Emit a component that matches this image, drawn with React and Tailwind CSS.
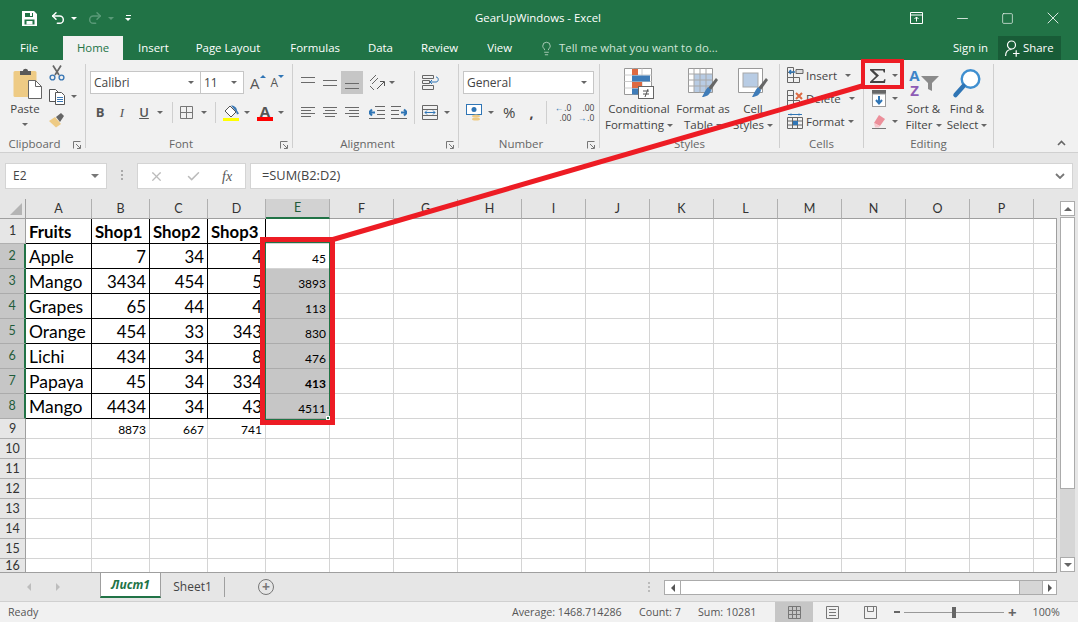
import React from 'react';
import { Undo2, Redo2, Lightbulb, X, Check, Minus, Square } from 'lucide-react';

function Caret({ className = '' }) {
  return <span className={`inline-block w-0 h-0 border-x-[3px] border-x-transparent border-t-[3px] border-t-[#666] ${className}`} />;
}

function Launcher() {
  return (
    <svg width="8" height="8" viewBox="0 0 8 8" className="absolute right-[4px] top-[5px]" fill="none" stroke="#777">
      <path d="M0.5 7.5V0.5H7.5" />
      <path d="M3 3l4 4M4 7.5h3.5V4" />
    </svg>
  );
}

function Group({ width, label, launcher = false, children }) {
  return (
    <div className={`flex shrink-0 ${width}`}>
      <div className="flex flex-1 flex-col min-w-0">
        <div className="h-[76px]">{children}</div>
        <div className={`relative h-[16px] text-center text-[11.5px] leading-[16px] text-[#666] ${launcher ? 'pr-[16px]' : ''}`}>
          {label}
          {launcher && <Launcher />}
        </div>
      </div>
      <div className="w-px my-[4px] bg-[#cfcfcf]" />
    </div>
  );
}

function LargeButton({ width, icon, line1, line2, caret }) {
  return (
    <div className={`flex flex-col items-center pt-[8px] ${width}`}>
      <div className="h-[33px]">{icon}</div>
      <div className="text-[11.5px] leading-[16px] whitespace-nowrap text-[#444]">{line1}</div>
      <div className="flex items-center gap-[3px] text-[11.5px] leading-[16px] whitespace-nowrap text-[#444]">
        {line2}
        {caret && <Caret />}
      </div>
    </div>
  );
}

function Lines({ rows, w = 16, h = 16 }) {
  return (
    <svg width={w} height={h} viewBox={`0 0 ${w} ${h}`} stroke="#6a6a6a" fill="none">
      {rows.map(([x1, x2, y], i) => (
        <path key={i} d={`M${x1} ${y + 0.5}H${x2}`} />
      ))}
    </svg>
  );
}

function PasteIcon() {
  return (
    <svg width="30" height="31" viewBox="0 0 30 31" className="ml-[5px]">
      <rect x="0.5" y="3" width="23" height="26" rx="1.5" fill="#eecb85" />
      <path d="M7 3h3c0-3 5-3 5 0h3v4H7z" fill="#595959" />
      <path d="M15.5 12.5h7l6 6v12h-13z" fill="#fff" stroke="#666" />
      <path d="M22.5 12.5v6h6" fill="none" stroke="#666" />
    </svg>
  );
}

function CutIcon() {
  return (
    <svg width="16" height="16" viewBox="0 0 16 16" fill="none">
      <path d="M4 0.5l6 9.5M12 0.5l-6 9.5" stroke="#666" strokeWidth="1.7" />
      <circle cx="3.5" cy="12.5" r="2.4" stroke="#3b78b5" strokeWidth="1.4" />
      <circle cx="12.5" cy="12.5" r="2.4" stroke="#3b78b5" strokeWidth="1.4" />
    </svg>
  );
}

function CopyIcon() {
  return (
    <svg width="16" height="16" viewBox="0 0 16 16" fill="#fff" stroke="#555">
      <path d="M0.5 0.5h6l3 3v9h-9z" />
      <path d="M6.5 3.5h6l3 3v9h-9z" />
      <path d="M8 8.5h6M8 10.5h6M8 12.5h6" stroke="#3b78b5" />
    </svg>
  );
}

function PainterIcon() {
  return (
    <svg width="16" height="16" viewBox="0 0 16 16">
      <path d="M0 9l6-4 6 7-5 3.5z" fill="#eecb85" />
      <path d="M7 5l5-4 3 3-4 6z" fill="#666" />
    </svg>
  );
}

function BordersIcon() {
  return (
    <svg width="14" height="14" viewBox="0 0 14 14" fill="none" stroke="#777">
      <path d="M0.5 0.5h12v12h-12zM6.5 0.5v12M0.5 6.5h12" />
    </svg>
  );
}

function FillIcon() {
  return (
    <svg width="17" height="16" viewBox="0 0 17 16">
      <path d="M7 1l6 6-5 5-6-6z" fill="#fff" stroke="#555" />
      <path d="M8 0.5c3 0 6 2 6 5l2 3-2 1-1-3z" fill="#3b78b5" />
      <rect x="0" y="13" width="16" height="3" fill="#ffff00" />
    </svg>
  );
}

function FontColorIcon() {
  return (
    <div className="flex flex-col items-center w-[16px] h-[17px]">
      <span className="h-[13px] text-[15px] leading-[14px] font-bold text-[#555]">A</span>
      <span className="mt-auto h-[4px] w-[16px] bg-[#ff0000]" />
    </div>
  );
}

function OrientIcon() {
  return (
    <svg width="17" height="17" viewBox="0 0 17 17" fill="none" stroke="#666">
      <path d="M1 7l6-6M3 10l6-6M1 12l4 4" />
      <path d="M8 15l7-7M11 7.5h4.5V12" stroke="#555" />
    </svg>
  );
}

function WrapIcon() {
  return (
    <svg width="17" height="16" viewBox="0 0 17 16" fill="none" stroke="#666">
      <path d="M0.5 0.5h11v3h-11zM0.5 5.5h7v3h-7zM0.5 10.5h11v4h-11z" />
      <path d="M8 7h6c3 0 3-5 0-5M8 7l2-2M8 7l2 2" stroke="#2f75b5" />
    </svg>
  );
}

function IndentIcon({ flip }) {
  return (
    <svg width="16" height="13" viewBox="0 0 16 13" fill="none" stroke="#666" className={flip ? '-scale-x-100' : ''}>
      <path d="M6 0.5h10M8 4.5h8M8 8.5h8M0 12.5h16" />
      <path d="M0 6.5h6M0 6.5l3-3M0 6.5l3 3" stroke="#2f75b5" strokeWidth="2" />
    </svg>
  );
}

function MergeIcon() {
  return (
    <svg width="16" height="15" viewBox="0 0 16 15" fill="none" stroke="#666">
      <path d="M0.5 0.5h15v14h-15zM0.5 4.5h15M0.5 10.5h15" />
      <path d="M3 7.5h10M3 7.5l2-2M3 7.5l2 2M13 7.5l-2-2M13 7.5l-2 2" stroke="#2f75b5" />
    </svg>
  );
}

function AccountingIcon() {
  return (
    <svg width="16" height="18" viewBox="0 0 16 18">
      <rect x="0.5" y="0.5" width="15" height="10" fill="#fff" stroke="#2f75b5" />
      <circle cx="8" cy="5.5" r="2.5" fill="#2f75b5" />
      <ellipse cx="10" cy="12" rx="4" ry="1.6" fill="#eecb85" />
      <ellipse cx="10" cy="15" rx="4" ry="1.6" fill="#eecb85" />
    </svg>
  );
}

function DecimalIcon({ top, bottom, dir }) {
  return (
    <div className="flex w-[18px] flex-col text-[8.5px] leading-[10px] text-[#444]">
      <div className="flex items-center justify-end gap-[1px]">
        {dir === 'left' && <span className="text-[#2f75b5] font-bold">←</span>}
        {top}
      </div>
      <div className="flex items-center justify-end gap-[1px]">
        {dir === 'right' && <span className="text-[#2f75b5] font-bold">→</span>}
        {bottom}
      </div>
    </div>
  );
}

function ConditionalIcon() {
  return (
    <svg width="30" height="31" viewBox="0 0 30 31">
      <path d="M0.5 0.5h27v26h-27z" fill="#fff" stroke="#999" />
      <path d="M0.5 7h27M0.5 13.5h27M0.5 20h27M9 0.5v26M18 0.5v26" stroke="#ccc" />
      <rect x="8" y="1" width="6" height="6" fill="#de6a42" />
      <rect x="8" y="7.5" width="18" height="6" fill="#3f7cb8" />
      <rect x="8" y="14" width="10" height="6" fill="#de6a42" />
      <rect x="8" y="20.5" width="6" height="6" fill="#3f7cb8" />
      <rect x="14.5" y="18.5" width="15" height="12" fill="#fff" stroke="#666" />
      <path d="M19 23h6M19 26h6M24 21l-3 8" stroke="#555" fill="none" />
    </svg>
  );
}

function FormatTableIcon() {
  return (
    <svg width="30" height="31" viewBox="0 0 30 31">
      <path d="M0.5 0.5h24v24h-24z" fill="#fff" stroke="#999" />
      <rect x="6" y="6" width="18" height="18" fill="#b8cce4" />
      <path d="M0.5 6h24M0.5 12h24M0.5 18h24M6 0.5v24M12 0.5v24M18 0.5v24" stroke="#a8a8a8" fill="none" />
      <path d="M28 10l2 2-7 10-3-2z" fill="#666" />
      <path d="M20 19l3 3c-1 5-5 7-9 7 2-3 3-7 6-10z" fill="#3f7cb8" />
    </svg>
  );
}

function CellStylesIcon() {
  return (
    <svg width="30" height="31" viewBox="0 0 30 31">
      <path d="M0.5 0.5h24v24h-24z" fill="#fff" stroke="#999" />
      <rect x="5" y="5" width="15" height="14" fill="#b8cce4" stroke="#a8a8a8" />
      <path d="M28 10l2 2-7 10-3-2z" fill="#666" />
      <path d="M20 19l3 3c-1 5-5 7-9 7 2-3 3-7 6-10z" fill="#3f7cb8" />
    </svg>
  );
}

function CellRowIcon({ kind }) {
  return (
    <svg width="17" height="17" viewBox="0 0 17 17" fill="none" stroke="#666">
      {kind === 'format' ? (
        <>
          <path d="M0.5 4.5h15v11h-15zM0.5 8h15M0.5 12h15M5.5 4.5v11M10.5 4.5v11" />
          <rect x="6" y="8" width="5" height="4" fill="#2f75b5" stroke="none" />
          <path d="M1 1.5h14M3 1.5l1-1M3 1.5l1 1M13 1.5l-1-1M13 1.5l-1 1" stroke="#2f75b5" />
        </>
      ) : (
        <>
          <path d="M0.5 0.5h6v5h-6zM0.5 5.5h6v5h-6zM0.5 10.5h6v5h-6zM6.5 10.5h6v5h-6z" />
          {kind === 'insert' ? (
            <>
              <path d="M9 2.5h7v4H9z" fill="#ddd" />
              <path d="M2 5h6M2 5l2-2M2 5l2 2" stroke="#2f75b5" strokeWidth="1.5" />
            </>
          ) : (
            <path d="M9 3l6 6M15 3l-6 6" stroke="#de6a42" strokeWidth="2" />
          )}
        </>
      )}
    </svg>
  );
}

function SigmaIcon() {
  return (
    <svg width="16" height="14" viewBox="0 0 16 14">
      <path d="M0 0h15v3.5h-1.2L13 1.6H3.5L9 6.5 3 12h10.5l.8-1.8h1.2L15 14H0v-1.3L6 7 0 1.2z" fill="#444" />
    </svg>
  );
}

function FillDownIcon() {
  return (
    <svg width="14" height="17" viewBox="0 0 14 17">
      <rect x="0" y="0" width="14" height="4" fill="#666" />
      <rect x="0.5" y="4" width="13" height="12.5" fill="#fff" stroke="#999" />
      <path d="M7 6v7M4 10l3 3.5 3-3.5" fill="none" stroke="#2f75b5" strokeWidth="2" />
    </svg>
  );
}

function EraserIcon() {
  return (
    <svg width="14" height="15" viewBox="0 0 14 15">
      <path d="M7 1l6 4-5 7-6-3z" fill="#ec8f9a" />
      <path d="M2 9l6 3-1 1.5H3z" fill="#f7c6cc" />
      <path d="M0 14.5h14" stroke="#777" />
    </svg>
  );
}

function SortIcon() {
  return (
    <div className="flex h-[31px] w-[31px]">
      <div className="flex w-[13px] flex-col items-center font-bold">
        <div className="h-[15px] text-[15px] leading-[15px] text-[#3f85c8]">A</div>
        <div className="h-[15px] text-[15px] leading-[15px] text-[#8e5bb5]">Z</div>
      </div>
      <svg width="18" height="16" viewBox="0 0 18 16" className="mt-[8px]">
        <path d="M0 0h18l-7 7v8l-4-2V7z" fill="#8a8a8a" />
      </svg>
    </div>
  );
}

function FindIcon() {
  return (
    <svg width="30" height="31" viewBox="0 0 30 31" fill="none">
      <circle cx="18.5" cy="11" r="8.8" stroke="#3f8fd0" strokeWidth="2.4" fill="#fff" />
      <path d="M11.5 18l-8 9" stroke="#2f75b5" strokeWidth="4.5" strokeLinecap="round" />
    </svg>
  );
}

function RibbonOptionsIcon() {
  return (
    <svg width="13" height="12" viewBox="0 0 13 12" fill="none" stroke="#fff">
      <path d="M0.5 0.5h12v11h-12zM0.5 3h12M6.5 9.5V5M4.5 7l2-2 2 2" />
    </svg>
  );
}

function ShareIcon() {
  return (
    <svg width="15" height="17" viewBox="0 0 15 17" fill="none" stroke="#fff" strokeWidth="1.2">
      <circle cx="6.5" cy="5" r="4" />
      <path d="M0.6 16c0-4 2.4-6.5 5.9-6.5M8 13.5h6.5M11.2 10.2v6.5" />
    </svg>
  );
}

const tabs = [
  ['File', 'ml-[20px] mr-[25px]'],
  ['Home', ''],
  ['Insert', 'ml-[15px]'],
  ['Page Layout', 'ml-[27px]'],
  ['Formulas', 'ml-[30px]'],
  ['Data', 'ml-[28px]'],
  ['Review', 'ml-[28px]'],
  ['View', 'ml-[29px]'],
];

function TitleBar() {
  return (
    <div className="shrink-0 bg-[#217346] text-white">
      <div className="flex h-[36px] items-center">
        <svg width="15" height="15" viewBox="0 0 15 15" className="ml-[22px]" fill="#fff">
          <path d="M0 0h12l3 3v12H0zM3 2v4h8V2zM2.500 8.500v5h10v-5z" fillRule="evenodd" />
          <rect x="8" y="2" width="2" height="3" />
          <rect x="4.500" y="10" width="6" height="3.500" />
        </svg>
        <Undo2 size={16} strokeWidth={2.2} className="ml-[13px]" />
        <Caret className="ml-[5px] !border-t-white" />
        <Redo2 size={16} strokeWidth={2.2} className="ml-[10px] text-[#5a9a78]" />
        <Caret className="ml-[5px] !border-t-[#5a9a78]" />
        <div className="ml-[11px] flex flex-col items-center gap-[2px]">
          <span className="h-px w-[5px] bg-white" />
          <Caret className="!border-t-white" />
        </div>
        <div className="ml-[344px] w-[126px] whitespace-nowrap text-[11.4px]">GearUpWindows - Excel</div>
        <div className="ml-[309px]"><RibbonOptionsIcon /></div>
        <Minus size={17} strokeWidth={1.1} className="ml-[31px]" />
        <Square size={13} strokeWidth={1.2} className="ml-[30px]" />
        <X size={20} strokeWidth={1} className="ml-[29px]" />
      </div>
      <div className="flex h-[24px] items-center text-[11.4px]">
        {tabs.map(([name, cls]) =>
          name === 'Home' ? (
            <div key={name} className="flex h-[24px] w-[60px] items-center justify-center bg-[#f1f1f1] text-[#217346]">{name}</div>
          ) : (
            <div key={name} className={cls}>{name}</div>
          )
        )}
        <Lightbulb size={15} strokeWidth={1.2} className="ml-[27px] text-[#cfe3d6]" />
        <div className="ml-[5px] text-[#cfe3d6]">Tell me what you want to do...</div>
        <div className="ml-auto">Sign in</div>
        <div className="ml-[10px] mr-[17px] flex h-[24px] w-[63px] items-center gap-[3px] bg-[#185c37] pl-[7px]">
          <ShareIcon />
          Share
        </div>
      </div>
    </div>
  );
}

function Ribbon() {
  return (
    <div className="flex h-[93px] shrink-0 border-b border-[#d0d0d0] bg-[#f1f1f1] text-[#444]">
      <Group width="w-[86px]" label="Clipboard" launcher>
        <div className="flex pl-[10px] pt-[8px]">
          <div className="flex w-[30px] flex-col items-center">
            <PasteIcon />
            <div className="mt-[2px] text-[11.5px] leading-[16px]">Paste</div>
            <Caret className="mt-[6px]" />
          </div>
          <div className="-mt-[3px] ml-[9px] flex flex-col gap-[7.5px]">
            <CutIcon />
            <div className="flex items-center gap-[6px]">
              <CopyIcon />
              <Caret />
            </div>
            <PainterIcon />
          </div>
        </div>
      </Group>

      <Group width="w-[207px]" label="Font" launcher>
        <div className="pl-[4px] pt-[11px]">
          <div className="flex h-[23px] items-center">
            <div className="flex h-[23px] w-[111px] items-center justify-between border border-[#c6c6c6] bg-white pl-[3px] pr-[6px] text-[12px]">
              Calibri
              <Caret />
            </div>
            <div className="flex h-[23px] w-[43px] items-center justify-between border border-l-0 border-[#c6c6c6] bg-white pl-[3px] pr-[6px] text-[12px]">
              11
              <Caret />
            </div>
            <span className="ml-[6px] flex items-start text-[15px] leading-[20px] text-[#555]">
              A<Caret className="mt-[2px] rotate-180 !border-t-[#2f75b5]" />
            </span>
            <span className="ml-[5px] flex items-start text-[12px] leading-[20px] text-[#555]">
              A<Caret className="mt-[2px] !border-t-[#2f75b5]" />
            </span>
          </div>
          <div className="mt-[7px] flex h-[23px] items-center">
            <span className="ml-[3px] w-[14px] text-center text-[13px] font-bold text-[#555]">B</span>
            <span className="ml-[8px] w-[14px] text-center text-[13px] italic text-[#555] font-['Liberation_Serif',serif]">I</span>
            <span className="ml-[8px] w-[14px] text-center text-[13px] font-semibold underline text-[#555]">U</span>
            <Caret className="ml-[6px]" />
            <span className="ml-[9px] h-[21px] w-px bg-[#cfcfcf]" />
            <span className="ml-[7px]"><BordersIcon /></span>
            <Caret className="ml-[7px]" />
            <span className="ml-[8px] h-[21px] w-px bg-[#cfcfcf]" />
            <span className="ml-[7px]"><FillIcon /></span>
            <Caret className="ml-[4px]" />
            <span className="ml-[7px]"><FontColorIcon /></span>
            <Caret className="ml-[5px]" />
          </div>
        </div>
      </Group>

      <Group width="w-[166px]" label="Alignment" launcher>
        <div className="flex pl-[4px] pt-[11px]">
          <div className="w-[117px]">
            <div className="flex h-[23px] items-center">
              <div className="flex w-[22px] justify-center"><Lines rows={[[0, 14, 2], [0, 14, 7]]} w={14} /></div>
              <div className="flex w-[22px] justify-center"><Lines rows={[[0, 14, 5], [0, 14, 10]]} w={14} /></div>
              <div className="flex h-[23px] w-[22px] items-center justify-center bg-[#c6c6c6]"><Lines rows={[[0, 14, 8], [0, 14, 13]]} w={14} /></div>
              <span className="ml-[6px]"><OrientIcon /></span>
              <Caret className="ml-[3px]" />
            </div>
            <div className="mt-[7px] flex h-[23px] items-center">
              <div className="flex w-[22px] justify-center"><Lines rows={[[0, 14, 2], [0, 10, 5], [0, 14, 8], [0, 10, 11]]} w={14} /></div>
              <div className="flex w-[22px] justify-center"><Lines rows={[[0, 14, 2], [2, 12, 5], [0, 14, 8], [2, 12, 11]]} w={14} /></div>
              <div className="flex w-[22px] justify-center"><Lines rows={[[0, 14, 2], [4, 14, 5], [0, 14, 8], [4, 14, 11]]} w={14} /></div>
              <span className="ml-[6px]"><IndentIcon /></span>
              <span className="ml-[6px]"><IndentIcon flip /></span>
            </div>
          </div>
          <span className="h-[53px] w-px bg-[#cfcfcf]" />
          <div className="ml-[7px]">
            <div className="flex h-[23px] items-center"><WrapIcon /></div>
            <div className="mt-[7px] flex h-[23px] items-center">
              <MergeIcon />
              <Caret className="ml-[6px]" />
            </div>
          </div>
        </div>
      </Group>

      <Group width="w-[141px]" label="Number" launcher>
        <div className="pl-[4px] pt-[11px]">
          <div className="flex h-[23px] w-[131px] items-center justify-between border border-[#c6c6c6] bg-white pl-[3px] pr-[6px] text-[12px]">
            General
            <Caret />
          </div>
          <div className="mt-[7px] flex h-[23px] items-center">
            <span className="ml-[3px]"><AccountingIcon /></span>
            <Caret className="ml-[6px]" />
            <span className="ml-[9px] text-[15px]">%</span>
            <span className="ml-[14px] text-[14px] font-bold">,</span>
            <span className="ml-[13px] h-[23px] w-px bg-[#cfcfcf]" />
            <span className="ml-[6px]"><DecimalIcon top=".0" bottom=".00" dir="left" /></span>
            <span className="ml-[5px]"><DecimalIcon top=".00" bottom=".0" dir="right" /></span>
          </div>
        </div>
      </Group>

      <Group width="w-[180px]" label="Styles">
        <div className="flex pl-[5px]">
          <LargeButton width="w-[68px]" icon={<ConditionalIcon />} line1="Conditional" line2="Formatting" caret />
          <LargeButton width="w-[60px]" icon={<FormatTableIcon />} line1="Format as" line2="Table" caret />
          <LargeButton width="w-[40px]" icon={<CellStylesIcon />} line1="Cell" line2="Styles" caret />
        </div>
      </Group>

      <Group width="w-[84px]" label="Cells">
        <div className="pl-[7px] pt-[4px] text-[11.5px]">
          <div className="flex h-[23px] items-center">
            <CellRowIcon kind="insert" />
            <span className="ml-[2px]">Insert</span>
            <Caret className="ml-[8px]" />
          </div>
          <div className="flex h-[23px] items-center">
            <CellRowIcon kind="delete" />
            <span className="ml-[2px]">Delete</span>
            <Caret className="ml-[8px]" />
          </div>
          <div className="flex h-[23px] items-center">
            <CellRowIcon kind="format" />
            <span className="ml-[2px]">Format</span>
            <Caret className="ml-[3px]" />
          </div>
        </div>
      </Group>

      <Group width="w-[130px]" label="Editing">
        <div className="flex pl-[6px]">
          <div className="w-[33px] pt-[4px]">
            <div className="flex h-[23px] items-center"><SigmaIcon /><Caret className="ml-[6px]" /></div>
            <div className="flex h-[23px] items-center pl-[2px]"><FillDownIcon /><Caret className="ml-[6px]" /></div>
            <div className="flex h-[23px] items-center pl-[2px]"><EraserIcon /><Caret className="ml-[6px]" /></div>
          </div>
          <LargeButton width="w-[41px]" icon={<SortIcon />} line1="Sort &" line2="Filter" caret />
          <LargeButton width="w-[46px]" icon={<FindIcon />} line1="Find &" line2="Select" caret />
        </div>
      </Group>

      <div className="flex flex-1 items-end justify-end pb-[6px] pr-[12px]">
        <svg width="9" height="6" viewBox="0 0 9 6" fill="none" stroke="#666" strokeWidth="1.6"><path d="M1 5l3.5-3.5L8 5" /></svg>
      </div>
    </div>
  );
}

function FormulaBar() {
  return (
    <div className="flex h-[46px] shrink-0 items-start pt-[10px] text-[#444]">
      <div className="ml-[5px] flex h-[26px] w-[102px] items-center justify-between border border-[#d4d4d4] bg-white pl-[7px] pr-[7px] text-[12px]">
        E2
        <span className="inline-block w-0 h-0 border-x-[4px] border-x-transparent border-t-[4px] border-t-[#777]" />
      </div>
      <div className="ml-[14px] mt-[7px] flex w-[3px] flex-col gap-[2px]">
        <span className="h-[2px] w-[2px] bg-[#aaa]" />
        <span className="h-[2px] w-[2px] bg-[#aaa]" />
        <span className="h-[2px] w-[2px] bg-[#aaa]" />
      </div>
      <div className="ml-[13px] flex h-[26px] w-[109px] items-center border border-[#d4d4d4] bg-white">
        <X size={15} strokeWidth={2} className="ml-[11px] text-[#bbb]" />
        <Check size={15} strokeWidth={2.4} className="ml-[22px] text-[#bbb]" />
        <span className="ml-[21px] font-['Liberation_Serif',serif] text-[14px] italic text-[#555]">fx</span>
      </div>
      <div className="ml-[4px] flex h-[26px] w-[823px] items-center justify-between border border-[#d4d4d4] bg-white pl-[11px] pr-[7px] text-[12.8px]">
        =SUM(B2:D2)
        <svg width="10" height="6" viewBox="0 0 10 6" fill="none" stroke="#777" strokeWidth="1.8"><path d="M1 1l4 4 4-4" /></svg>
      </div>
    </div>
  );
}

const columns = ['A', 'B', 'C', 'D', 'E', 'F', 'G', 'H', 'I', 'J', 'K', 'L', 'M', 'N', 'O', 'P', ''];

const sheet = [
  ['Fruits', 'Shop1', 'Shop2', 'Shop3', ''],
  ['Apple', 7, 34, 4, 45],
  ['Mango', 3434, 454, 5, 3893],
  ['Grapes', 65, 44, 4, 113],
  ['Orange', 454, 33, 343, 830],
  ['Lichi', 434, 34, 8, 476],
  ['Papaya', 45, 34, 334, 413],
  ['Mango', 4434, 34, 43, 4511],
  ['', 8873, 667, 741, ''],
];

function cellClass(row, col) {
  const boxed = row <= 8 && col <= 3;
  const selected = col === 4 && row >= 3 && row <= 8;
  const border = boxed ? 'border-black' : selected ? 'border-[#ababab]' : 'border-[#d4d4d4]';
  const bg = selected ? 'bg-[#c6c6c6]' : 'bg-white';
  return `${border} ${bg} ${col === 16 ? 'border-r-[#9f9f9f]' : ''}`;
}

function textClass(row, col, isNumber) {
  if (col === 4) return 'items-end pb-[1px] text-[12px] leading-[16px]';
  if (row === 9) return 'items-end text-[12px] leading-[16px]';
  if (row === 1) return 'items-center pt-[2px] text-[16.8px] font-bold leading-[22px]';
  return `items-center pt-[2px] leading-[22px] ${isNumber ? 'text-[16.8px]' : 'text-[17.5px]'}`;
}

function Cell({ row, col }) {
  const raw = row <= sheet.length ? sheet[row - 1][col] : '';
  const value = raw === undefined ? '' : raw;
  const isNumber = typeof value === 'number';
  return (
    <div
      className={`flex overflow-visible border-b border-r whitespace-nowrap text-black font-['Lato',sans-serif] ${cellClass(row, col)} ${
        isNumber ? 'justify-end pr-[3px]' : 'pl-[3px]'
      } ${textClass(row, col, isNumber)} ${row === 7 && col === 4 ? 'font-bold' : ''}`}
    >
      {value}
    </div>
  );
}

function SheetGrid() {
  const rowNumbers = Array.from({ length: 16 }, (_, i) => i + 1);
  return (
    <div className="grid h-[374px] w-[1057px] grid-cols-[26px_66px_58px_58px_58px_repeat(12,64px)_23px] grid-rows-[20px_repeat(8,25px)_repeat(7,20px)_14px] overflow-hidden border-b border-[#9f9f9f] text-[12.5px]">
      <div className="flex items-end justify-end border-b border-r border-[#9f9f9f] bg-[#e6e6e6] pb-[3px] pr-[3px]">
        <span className="h-0 w-0 border-b-[12px] border-l-[12px] border-b-[#b4b4b4] border-l-transparent" />
      </div>
      {columns.map((c) => (
        <div
          key={c || 'end'}
          className={`flex items-center justify-center pt-[1px] font-['Lato',sans-serif] ${
            c === 'E'
              ? 'border-b-2 border-b-[#217346] border-r border-r-[#b0b0b0] bg-[#d2d2d2] text-[#1f5c3a]'
              : c === ''
                ? 'border-b border-b-[#9f9f9f] bg-[#e6e6e6]'
                : 'border-b border-r border-b-[#9f9f9f] border-r-[#b0b0b0] bg-[#e6e6e6] text-[#333]'
          }`}
        >
          {c}
        </div>
      ))}
      {rowNumbers.map((row) => (
        <React.Fragment key={row}>
          <div
            className={`flex items-center justify-center pt-[1px] font-['Lato',sans-serif] ${
              row >= 2 && row <= 8
                ? 'border-b border-r-2 border-b-[#ababab] border-r-[#217346] bg-[#c6c6c6] text-[#1f5c3a]'
                : 'border-b border-r border-b-[#b0b0b0] border-r-[#9f9f9f] bg-[#e6e6e6] text-[#333]'
            }`}
          >
            {row}
          </div>
          {columns.map((c, col) => (
            <Cell key={c || 'end'} row={row} col={col} />
          ))}
        </React.Fragment>
      ))}
    </div>
  );
}

function ScrollButton({ children, className = '' }) {
  return (
    <div className={`flex items-center justify-center border border-[#ababab] bg-white ${className}`}>{children}</div>
  );
}

function VerticalScroll() {
  return (
    <div className="flex h-[374px] w-[21px] flex-col pb-[1px] pl-[3px] pr-[3px] pt-[2px]">
      <ScrollButton className="h-[15px] shrink-0">
        <span className="h-0 w-0 border-x-[4px] border-b-[4px] border-x-transparent border-b-[#666]" />
      </ScrollButton>
      <div className="mt-px h-[272px] shrink-0 border border-[#ababab] bg-white" />
      <div className="flex-1 bg-[#d6d6d6]" />
      <ScrollButton className="h-[15px] shrink-0">
        <span className="h-0 w-0 border-x-[4px] border-t-[4px] border-x-transparent border-t-[#666]" />
      </ScrollButton>
    </div>
  );
}

function SheetTabs() {
  return (
    <div className="flex h-[28px] shrink-0 items-start text-[12px] text-[#444]">
      <span className="ml-[27px] mt-[10px] h-0 w-0 border-y-[4px] border-r-[4px] border-y-transparent border-r-[#bdbdbd]" />
      <span className="ml-[25px] mt-[10px] h-0 w-0 border-y-[4px] border-l-[4px] border-y-transparent border-l-[#bdbdbd]" />
      <div className="ml-[40px] flex h-[25px] w-[61px] items-center justify-center border-x border-b-2 border-x-[#9f9f9f] border-b-[#217346] bg-white font-bold italic text-[#217346]">
        Лист1
      </div>
      <div className="mt-[4px] flex h-[20px] w-[64px] items-center justify-center border-r border-[#9f9f9f]">Sheet1</div>
      <div className="ml-[33px] mt-[6px] flex h-[16px] w-[16px] items-center justify-center rounded-full border border-[#777] text-[14px] font-bold leading-[14px] text-[#777]">
        +
      </div>
      <div className="ml-[374px] mt-[9px] flex flex-col gap-[2px]">
        <span className="h-[2px] w-[2px] bg-[#bbb]" />
        <span className="h-[2px] w-[2px] bg-[#bbb]" />
        <span className="h-[2px] w-[2px] bg-[#bbb]" />
      </div>
      <div className="ml-[14px] mt-[7px] flex h-[15px] w-[393px] border border-[#ababab] bg-[#d6d6d6]">
        <div className="flex w-[15px] items-center justify-center bg-white">
          <span className="h-0 w-0 border-y-[4px] border-r-[4px] border-y-transparent border-r-[#555]" />
        </div>
        <div className="w-[340px] border-x border-[#ababab] bg-white" />
        <div className="ml-auto flex w-[14px] items-center justify-center border-l border-[#ababab] bg-white">
          <span className="h-0 w-0 border-y-[4px] border-l-[4px] border-y-transparent border-l-[#555]" />
        </div>
      </div>
    </div>
  );
}

function StatusBar() {
  return (
    <div className="flex h-[21px] shrink-0 items-center border-t border-[#d0d0d0] bg-[#f1f1f1] text-[10.7px] text-[#555]">
      <span className="ml-[8px] w-[31px]">Ready</span>
      <span className="ml-[473px] w-[110px] whitespace-nowrap">Average: 1468.714286</span>
      <span className="ml-[17px] w-[43px] whitespace-nowrap">Count: 7</span>
      <span className="ml-[16px] w-[57px] whitespace-nowrap">Sum: 10281</span>
      <div className="ml-[20px] flex h-[21px] w-[38px] items-center justify-center bg-[#c6c6c6]">
        <svg width="13" height="13" viewBox="0 0 13 13" fill="none" stroke="#777"><path d="M0.5 0.5h12v12h-12zM4.5 0.5v12M8.5 0.5v12M0.5 4.5h12M0.5 8.5h12" /></svg>
      </div>
      <div className="flex w-[38px] justify-center">
        <svg width="13" height="13" viewBox="0 0 13 13" fill="none" stroke="#777"><path d="M0.5 0.5h12v12h-12zM3 3.5h7M3 6.5h7M3 9.5h7" /></svg>
      </div>
      <div className="flex w-[38px] justify-center">
        <svg width="13" height="13" viewBox="0 0 13 13" fill="none" stroke="#777"><path d="M0.5 0.5h12v12h-12zM3.5 0.5v5h6v-5" /></svg>
      </div>
      <span className="ml-[5px] h-[2px] w-[6px] bg-[#666]" />
      <div className="ml-[4px] flex h-px w-[100px] items-center justify-center bg-[#999]">
        <span className="h-[11px] w-[4px] bg-[#666]" />
      </div>
      <span className="ml-[4px] text-[15px] font-bold leading-none text-[#666]">+</span>
      <span className="ml-[16px]">100%</span>
    </div>
  );
}

export default function App() {
  return (
    <div className="relative flex h-[622px] w-[1078px] flex-col overflow-hidden bg-[#e6e6e6] font-['Open_Sans',sans-serif]">
      <TitleBar />
      <Ribbon />
      <FormulaBar />
      <div className="flex shrink-0">
        <SheetGrid />
        <VerticalScroll />
      </div>
      <SheetTabs />
      <StatusBar />

      {/* red annotation drawn over the sheet */}
      <svg className="pointer-events-none absolute left-0 top-0" width="1078" height="622" fill="none">
        <path d="M333 239.5L862 86" stroke="#ed1c24" strokeWidth="5" />
      </svg>
      <div className="pointer-events-none absolute left-[260px] top-[237px] h-[188px] w-[75px] border-[5px] border-[#ed1c24]">
        <div className="relative h-full border border-[#217346]">
          <span className="absolute -bottom-px -right-px h-[4px] w-[4px] border border-white bg-[#217346]" />
        </div>
      </div>
      <div className="pointer-events-none absolute left-[861px] top-[59px] h-[30px] w-[43px] border-[4px] border-[#ed1c24]" />
    </div>
  );
}
